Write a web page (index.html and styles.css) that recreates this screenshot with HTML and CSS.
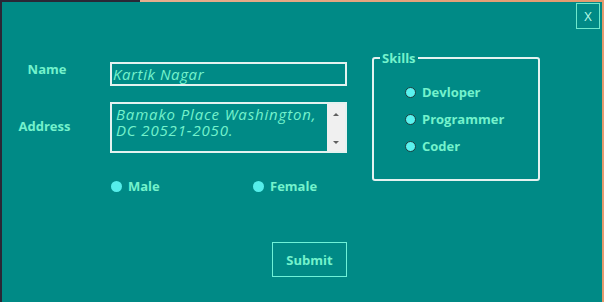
FILE: index.html
```html
<!DOCTYPE html>
<html>
<head>
<meta charset="utf-8">
<link rel="stylesheet" href="styles.css">
</head>
<body>
<div class="panel">
  <button class="close">X</button>
  <form class="form">
    <label class="lbl lbl-name">Name</label>
    <input class="field" type="text" value="Kartik Nagar">
    <label class="lbl lbl-addr">Address</label>
    <div class="area">
      <textarea class="area-text">Bamako Place Washington, DC 20521-2050.</textarea>
      <div class="scroll">
        <span class="arrow up"></span>
        <span class="arrow down"></span>
      </div>
    </div>
    <div class="gender">
      <label class="opt opt-male"><span class="dot"></span>Male</label>
      <label class="opt"><span class="dot"></span>Female</label>
    </div>
    <button type="button" class="submit">Submit</button>
  </form>
  <fieldset class="skills">
    <legend class="legend">Skills</legend>
    <div class="skill-list">
      <label class="opt skill"><span class="dot ring"></span>Devloper</label>
      <label class="opt skill"><span class="dot ring"></span>Programmer</label>
      <label class="opt skill"><span class="dot ring"></span>Coder</label>
    </div>
  </fieldset>
</div>
</body>
</html>
```

FILE: styles.css
```css
* { box-sizing: border-box; }
html, body { margin: 0; padding: 0; }
body {
  width: 604px;
  height: 302px;
  overflow: hidden;
  background: linear-gradient(to right, #2a2736 0, #2a2736 140px, #e6ae8e 140px, #e49a6e 100%);
  font-family: "Open Sans", "Liberation Sans", sans-serif;
}
.panel {
  position: relative;
  margin: 2px 0 0 2px;
  width: 600px;
  height: 300px;
  background: #008a86;
  display: flex;
  align-items: flex-start;
  color: #74f2cc;
}
.close {
  position: absolute;
  top: 1px;
  right: 2px;
  width: 24px;
  height: 26px;
  padding: 0;
  background: transparent;
  border: 1px solid #6fe8cc;
  color: #b8fbe6;
  font-family: "Open Sans", sans-serif;
  font-size: 13px;
  line-height: 24px;
}
.form {
  display: grid;
  grid-template-columns: 88px 237px;
  column-gap: 20px;
  row-gap: 16px;
  align-content: start;
  padding-top: 60px;
  width: 370px;
  margin: 0;
}
.lbl {
  font-weight: 700;
  font-size: 13px;
  line-height: 16px;
  text-align: center;
  color: #74f2cc;
}
.lbl-name { align-self: start; margin-top: -1px; padding-left: 2px; }
.lbl-addr { align-self: center; margin-top: -3px; padding-right: 3px; }
.field {
  height: 24px;
  width: 237px;
  border: 2px solid #e4f2f0;
  background: transparent;
  color: #74f2cc;
  font-family: "Open Sans", sans-serif;
  font-style: italic;
  font-size: 15px;
  letter-spacing: 0.6px;
  padding: 0 0 0 1px;
  outline: none;
}
.area {
  display: flex;
  height: 51px;
  width: 237px;
  border: 2px solid #e4f2f0;
}
.area-text {
  flex: 1;
  border: 0;
  background: transparent;
  resize: none;
  overflow: hidden;
  color: #74f2cc;
  font-family: "Open Sans", sans-serif;
  font-style: italic;
  font-size: 15px;
  letter-spacing: 0.85px;
  line-height: 16px;
  padding: 2px 0 0 4px;
  outline: none;
}
.scroll {
  width: 18px;
  background: #f0f0f0;
  display: flex;
  flex-direction: column;
  justify-content: space-between;
  align-items: center;
  padding: 9px 0 7px;
}
.arrow {
  width: 0;
  height: 0;
  border-left: 3px solid transparent;
  border-right: 3px solid transparent;
}
.arrow.up { border-bottom: 3px solid #606060; }
.arrow.down { border-top: 3px solid #606060; }
.gender {
  grid-column: 2;
  display: flex;
  margin-top: 9px;
  padding-left: 1px;
}
.opt {
  display: flex;
  align-items: center;
  gap: 6px;
  font-weight: 700;
  font-size: 13px;
  line-height: 16px;
  color: #74f2cc;
}
.opt-male { width: 142px; }
.dot {
  width: 11px;
  height: 11px;
  border-radius: 50%;
  background: #55eeea;
  flex: none;
}
.dot.ring {
  border: 1px solid #1d3f40;
  background: #5af2ee;
}
.submit {
  grid-column: 2;
  justify-self: end;
  margin-top: 32px;
  width: 75px;
  height: 35px;
  background: transparent;
  border: 1px solid #6ff2d8;
  color: #74f2cc;
  font-family: "Open Sans", sans-serif;
  font-weight: 700;
  font-size: 13px;
  padding: 0;
}
.skills {
  margin: 48px 0 0 0;
  width: 168px;
  height: 131px;
  border: 2px solid #e4f2f0;
  border-radius: 3px;
  padding: 0;
}
.legend {
  margin-left: 6px;
  padding: 0 2px;
  font-weight: 700;
  font-size: 13px;
  line-height: 16px;
  color: #74f2cc;
}
.skill-list {
  display: flex;
  flex-direction: column;
  gap: 11px;
  padding: 18px 0 0 31px;
}
```
